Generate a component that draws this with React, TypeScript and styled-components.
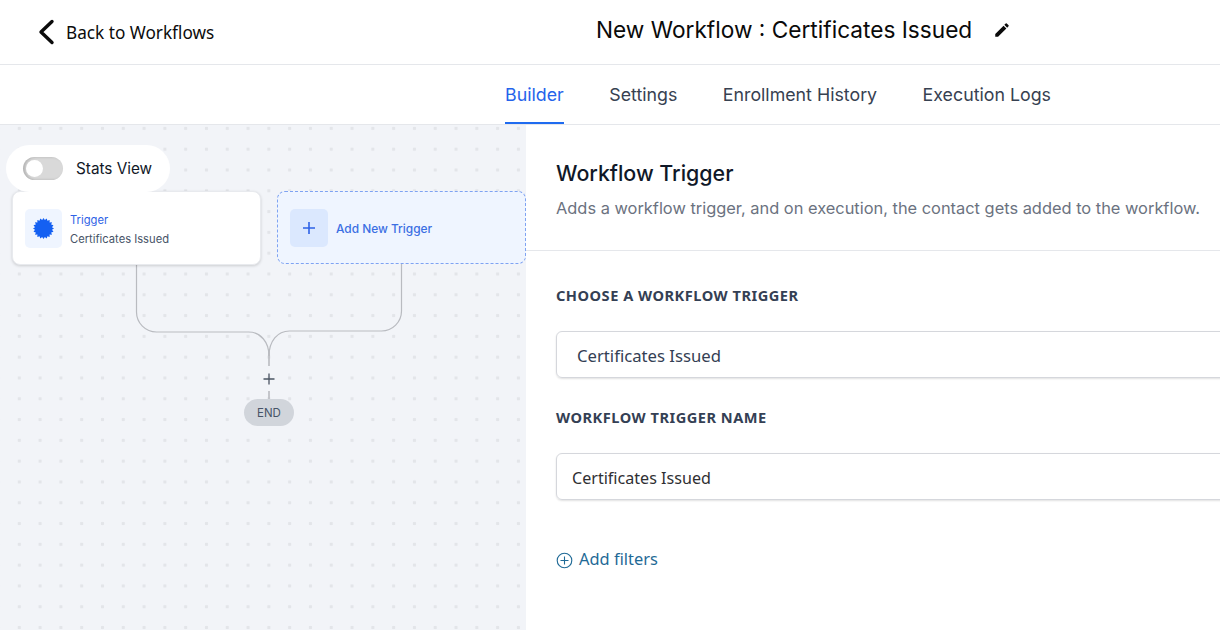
import React from "react"
import styled, { createGlobalStyle } from "styled-components"

const GlobalStyle = createGlobalStyle`
  html, body {
    margin: 0;
    padding: 0;
    background: #fff;
    overflow: hidden;
  }
  * {
    box-sizing: border-box;
  }
`

const Page = styled.div`
  width: 1220px;
  height: 630px;
  display: flex;
  flex-direction: column;
  overflow: hidden;
  font-family: "Inter", sans-serif;
`

const TopBar = styled.header`
  height: 65px;
  flex: none;
  display: flex;
  align-items: center;
  border-bottom: 1px solid #e5e7eb;
`

const BackLink = styled.a`
  width: 596px;
  flex: none;
  display: flex;
  align-items: center;
  gap: 11px;
  padding-left: 37px;
  color: #0b0b0b;
  font-family: "Noto Sans", sans-serif;
  font-size: 17.2px;
  line-height: 24px;
`

const BackText = styled.span`
  margin-top: 1px;
`

const Title = styled.h1`
  margin: -4px 0 0;
  display: flex;
  align-items: center;
  gap: 21px;
  font-size: 22.66px;
  line-height: 30px;
  font-weight: 400;
  color: #0a0a0a;
  white-space: nowrap;
`

const Tabs = styled.nav`
  height: 60px;
  flex: none;
  display: flex;
  gap: 45.5px;
  padding-left: 505px;
  border-bottom: 1px solid #e5e7eb;
`

const Tab = styled.a<{ $active?: boolean }>`
  height: 59px;
  padding-top: 18px;
  font-size: 17.8px;
  line-height: 24px;
  color: ${(p) => (p.$active ? "#2563eb" : "#374151")};
  border-bottom: 2px solid ${(p) => (p.$active ? "#1f6bf0" : "transparent")};
`

const Body = styled.main`
  flex: 1;
  display: flex;
  min-height: 0;
`

const Canvas = styled.section`
  position: relative;
  width: 526px;
  flex: none;
  overflow: hidden;
  background-color: #f2f4f8;
  background-image: radial-gradient(circle at center, #e3e5e9 1.7px, transparent 2px);
  background-size: 20.8px 20.8px;
  background-position: 8.9px -7px;
`

const Connectors = styled.svg`
  position: absolute;
  left: 0;
  top: -125px;
`

const StatsPill = styled.div`
  position: absolute;
  left: 6px;
  top: 20px;
  width: 164px;
  height: 47px;
  display: flex;
  align-items: center;
  gap: 13px;
  padding-left: 17px;
  background: #fff;
  border-radius: 24px;
  z-index: 2;
  font-size: 15.3px;
  color: #111827;
`

const Toggle = styled.span`
  position: relative;
  width: 40px;
  height: 23px;
  border-radius: 12px;
  background: #d9d9d9;
  box-shadow: inset 2px 0 3px rgba(0, 0, 0, 0.18);
`

const Knob = styled.span`
  position: absolute;
  left: 3px;
  top: 3px;
  width: 17px;
  height: 17px;
  border-radius: 50%;
  background: #fff;
`

const NodeCard = styled.div<{ $left: number; $top: number; $add?: boolean }>`
  position: absolute;
  left: ${(p) => p.$left}px;
  top: ${(p) => p.$top}px;
  width: 249px;
  height: ${(p) => (p.$add ? 73 : 74)}px;
  display: flex;
  align-items: center;
  padding-left: 12px;
  gap: 8px;
  border-radius: 8px;
  background: ${(p) => (p.$add ? "#eff5ff" : "#fff")};
  border: ${(p) => (p.$add ? "1px dashed #7fa3f2" : "1px solid #e8eaee")};
  box-shadow: ${(p) => (p.$add ? "none" : "0 1px 3px rgba(0, 0, 0, 0.16)")};
  z-index: 1;
`

const IconBox = styled.span<{ $add?: boolean }>`
  width: ${(p) => (p.$add ? 38 : 37)}px;
  height: ${(p) => (p.$add ? 38 : 39)}px;
  flex: none;
  display: flex;
  align-items: center;
  justify-content: center;
  border-radius: 5px;
  background: ${(p) => (p.$add ? "#dbe8fe" : "#eff5ff")};
`

const NodeText = styled.div`
  display: flex;
  flex-direction: column;
  gap: 5px;
  margin-top: 2px;
  font-size: 11.2px;
  line-height: 14px;
`

const NodeTitle = styled.span`
  color: #2e62e6;
`

const NodeSub = styled.span`
  color: #475467;
`

const AddLabel = styled.span`
  margin-top: 1px;
  font-size: 11.9px;
  font-weight: 500;
  color: #3b6fe3;
`

const PlusSign = styled.svg`
  position: absolute;
  left: 262px;
  top: 247px;
`

const EndPill = styled.div`
  position: absolute;
  left: 244px;
  top: 274px;
  width: 50px;
  height: 27px;
  display: flex;
  align-items: center;
  justify-content: center;
  padding-top: 1px;
  border-radius: 14px;
  background: #d1d5db;
  font-size: 11.5px;
  color: #475467;
`

const Panel = styled.section`
  flex: 1;
  min-width: 0;
  background: #fff;
`

const PanelHead = styled.div`
  height: 126px;
  padding: 33px 0 0 30px;
  border-bottom: 1px solid #e5e7eb;
`

const PanelTitle = styled.h2`
  margin: 0;
  font-size: 21.4px;
  line-height: 30px;
  font-weight: 500;
  color: #101828;
`

const PanelSub = styled.p`
  margin: 8px 0 0;
  font-size: 16.4px;
  line-height: 24px;
  color: #6b7280;
  white-space: nowrap;
`

const Form = styled.div`
  display: flex;
  flex-direction: column;
  padding: 33px 0 0 30px;
`

const FieldLabel = styled.label`
  font-family: "Noto Sans", sans-serif;
  font-size: 14.6px;
  line-height: 22px;
  font-weight: 700;
  letter-spacing: 0.5px;
  color: #344054;
`

const FieldBox = styled.div<{ $select?: boolean }>`
  width: 700px;
  height: 47px;
  margin: 25px 0 28px;
  display: flex;
  align-items: center;
  padding: 2px 0 0 ${(p) => (p.$select ? 20 : 15)}px;
  border: 1px solid #d5d7dc;
  border-radius: 6px;
  box-shadow: 0 1px 2px rgba(0, 0, 0, 0.12);
  font-family: "Noto Sans", sans-serif;
  font-size: ${(p) => (p.$select ? 16.7 : 16.1)}px;
  color: ${(p) => (p.$select ? "#344054" : "#2f2f33")};
`

const AddFilters = styled.a`
  margin-top: 19px;
  display: flex;
  align-items: center;
  gap: 6px;
  font-family: "Noto Sans", sans-serif;
  font-size: 16.4px;
  line-height: 24px;
  color: #1f6a96;
`

const FilterIcon = styled.svg`
  margin-top: 3px;
`

// scalloped badge for the trigger icon
const burst = Array.from({ length: 40 }, (_, i) => {
  const r = i % 2 === 0 ? 10.5 : 8.6
  const a = (i * Math.PI) / 20
  return `${(10.5 + r * Math.sin(a)).toFixed(2)},${(10.5 - r * Math.cos(a)).toFixed(2)}`
}).join(" ")

const App = () => {
  return (
    <Page>
      <GlobalStyle />
      <TopBar>
        <BackLink>
          <svg width="18" height="26" viewBox="0 0 18 26" fill="none">
            <path d="M15 2.500 4 13l11 10.500" stroke="#0b0b0b" strokeWidth="3.400" strokeLinecap="round" strokeLinejoin="round" />
          </svg>
          <BackText>Back to Workflows</BackText>
        </BackLink>
        <Title>
          New Workflow : Certificates Issued
          <svg width="18" height="18" viewBox="0 0 24 24" fill="#0a0a0a">
            <path d="M3 17.250V21h3.750L17.810 9.940l-3.750-3.750L3 17.250zM20.710 7.040a1 1 0 0 0 0-1.410l-2.340-2.340a1 1 0 0 0-1.410 0l-1.830 1.830 3.750 3.750 1.830-1.830z" />
          </svg>
        </Title>
      </TopBar>
      <Tabs>
        <Tab $active>Builder</Tab>
        <Tab>Settings</Tab>
        <Tab>Enrollment History</Tab>
        <Tab>Execution Logs</Tab>
      </Tabs>
      <Body>
        <Canvas>
          <Connectors width="526" height="630" fill="none" stroke="#b9bbc0" strokeWidth="1.200">
            <path d="M136.500 260v52a20 20 0 0 0 20 20h92c12 0 20.500 10 20.500 24" />
            <path d="M401.500 260v51a20 20 0 0 1-20 20h-92c-12 0-20.500 10-20.500 25" />
            <path d="M269 350v16M269 391v9" strokeWidth="1.600" />
          </Connectors>
          <StatsPill>
            <Toggle>
              <Knob />
            </Toggle>
            Stats View
          </StatsPill>
          <NodeCard $left={12} $top={66}>
            <IconBox>
              <svg width="21" height="21" viewBox="0 0 21 21">
                <polygon fill="#1460f2" points={burst} />
              </svg>
            </IconBox>
            <NodeText>
              <NodeTitle>Trigger</NodeTitle>
              <NodeSub>Certificates Issued</NodeSub>
            </NodeText>
          </NodeCard>
          <NodeCard $left={277} $top={66} $add>
            <IconBox $add>
              <svg width="14" height="14" viewBox="0 0 14 14" stroke="#2e62e6" strokeWidth="1.600">
                <path d="M7 1v12M1 7h12" />
              </svg>
            </IconBox>
            <AddLabel>Add New Trigger</AddLabel>
          </NodeCard>
          <PlusSign width="14" height="14" viewBox="0 0 14 14" stroke="#4b5563" strokeWidth="1.300">
            <path d="M7 1.500v11M1.500 7h11" />
          </PlusSign>
          <EndPill>END</EndPill>
        </Canvas>
        <Panel>
          <PanelHead>
            <PanelTitle>Workflow Trigger</PanelTitle>
            <PanelSub>Adds a workflow trigger, and on execution, the contact gets added to the workflow.</PanelSub>
          </PanelHead>
          <Form>
            <FieldLabel>CHOOSE A WORKFLOW TRIGGER</FieldLabel>
            <FieldBox $select>Certificates Issued</FieldBox>
            <FieldLabel>WORKFLOW TRIGGER NAME</FieldLabel>
            <FieldBox>Certificates Issued</FieldBox>
            <AddFilters>
              <FilterIcon width="17" height="17" viewBox="0 0 17 17" fill="none" stroke="#1f6a96" strokeWidth="1.100">
                <circle cx="8.500" cy="8.500" r="7.300" />
                <path d="M8.500 4.500v8M4.500 8.500h8" />
              </FilterIcon>
              Add filters
            </AddFilters>
          </Form>
        </Panel>
      </Body>
    </Page>
  )
}

export default App
